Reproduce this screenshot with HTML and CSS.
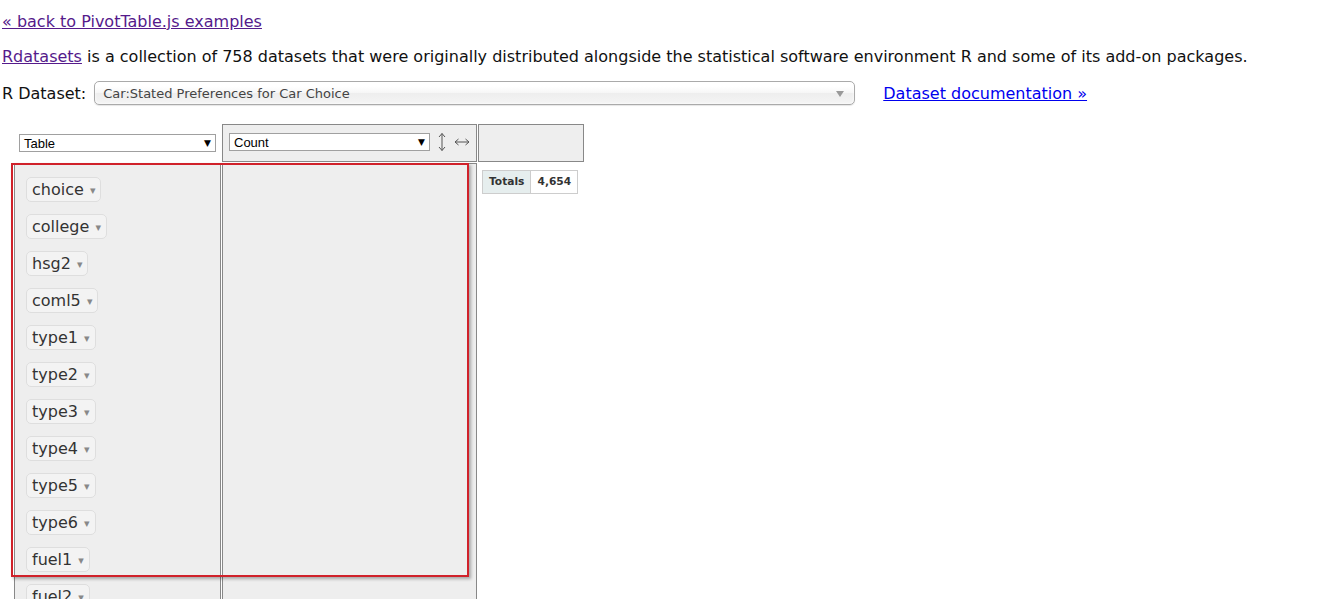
FILE: index.html
```html
<!DOCTYPE html>
<html>
<head>
<meta charset="utf-8">
<link rel="stylesheet" href="styles.css">
</head>
<body>
<p class="first"><a class="visited" href="#">« back to PivotTable.js examples</a></p>
<p class="second"><a class="visited" href="#">Rdatasets</a> is a collection of 758 datasets that were originally distributed alongside the statistical software environment R and some of its add-on packages.</p>
<p class="dsrow">
  <span class="dslabel">R Dataset:</span>
  <span class="chosen"><span class="chosen-text">Car:Stated Preferences for Car Choice</span><span class="chosen-arrow"></span></span>
  <a class="doclink" href="#">Dataset documentation »</a>
</p>

<div class="output">
  <table class="pvtUi">
    <tr class="row1">
      <td class="pvtRenderer">
        <div class="sel sel-table"><span>Table</span><span class="sel-arrow">▼</span></div>
      </td>
      <td class="pvtVals">
        <div class="valsline">
          <div class="sel sel-count"><span>Count</span><span class="sel-arrow">▼</span></div>
          <svg class="order" width="10" height="20" viewBox="0 0 10 20"><path d="M5 1.5 V18.5 M2 5 L5 1.5 L8 5 M2 15 L5 18.5 L8 15" fill="none" stroke="#555" stroke-width="1"/></svg>
          <svg class="order" width="16" height="10" viewBox="0 0 16 10"><path d="M1 5 H15 M4.5 2 L1 5 L4.5 8 M11.5 2 L15 5 L11.5 8" fill="none" stroke="#555" stroke-width="1"/></svg>
        </div>
      </td>
      <td class="pvtCols"></td>
    </tr>
    <tr class="row2">
      <td class="pvtUnused">
        <ul class="attrs">
          <li><span class="pvtAttr">choice <span class="tri">▾</span></span></li>
          <li><span class="pvtAttr">college <span class="tri">▾</span></span></li>
          <li><span class="pvtAttr">hsg2 <span class="tri">▾</span></span></li>
          <li><span class="pvtAttr">coml5 <span class="tri">▾</span></span></li>
          <li><span class="pvtAttr">type1 <span class="tri">▾</span></span></li>
          <li><span class="pvtAttr">type2 <span class="tri">▾</span></span></li>
          <li><span class="pvtAttr">type3 <span class="tri">▾</span></span></li>
          <li><span class="pvtAttr">type4 <span class="tri">▾</span></span></li>
          <li><span class="pvtAttr">type5 <span class="tri">▾</span></span></li>
          <li><span class="pvtAttr">type6 <span class="tri">▾</span></span></li>
          <li><span class="pvtAttr">fuel1 <span class="tri">▾</span></span></li>
          <li><span class="pvtAttr">fuel2 <span class="tri">▾</span></span></li>
        </ul>
      </td>
      <td class="pvtRows"></td>
      <td class="pvtRendererArea">
        <table class="pvtTable">
          <tr><th class="pvtTotalLabel">Totals</th><td class="pvtGrandTotal">4,654</td></tr>
        </table>
      </td>
    </tr>
  </table>
  <div class="highlight"></div>
</div>
</body>
</html>
```
FILE: styles.css
```css
html, body {
  margin: 0;
  padding: 0;
  background: #fff;
}
body {
  padding-left: 2px;
  font-family: "DejaVu Sans", Verdana, sans-serif;
  font-size: 16px;
  line-height: 19px;
  color: #111;
  overflow: hidden;
  height: 599px;
}
p {
  margin: 16px 0;
}
p.first {
  margin-top: 12px;
}
p.second {
  margin-bottom: 15px;
}
p.dsrow {
  margin-top: 15px;
}
a {
  color: #0000ee;
  text-decoration: underline;
}
a.visited {
  color: #551a8b;
}
.dsrow {
  display: flex;
  align-items: center;
  height: 24px;
}
.dslabel {
  margin-right: 8px;
}
.chosen {
  box-sizing: border-box;
  width: 761px;
  height: 24px;
  border: 1px solid #aaa;
  border-radius: 5px;
  background: linear-gradient(#ffffff 20%, #f6f6f6 50%, #eeeeee 52%, #f4f4f4 100%);
  box-shadow: 0 0 3px #fff inset, 0 1px 1px rgba(0,0,0,0.1);
  display: flex;
  align-items: center;
  justify-content: space-between;
  padding: 0 10px 0 8px;
  font-size: 13px;
  color: #444;
}
.chosen-arrow {
  width: 0;
  height: 0;
  border-left: 4px solid transparent;
  border-right: 4px solid transparent;
  border-top: 6px solid #999;
  margin-top: 1px;
}
.doclink {
  margin-left: 28px;
}
.output {
  position: relative;
  margin-top: 18px;
  margin-left: 11px;
}
.pvtUi {
  border-collapse: separate;
  border-spacing: 1px;
  color: #333;
}
.pvtUi > tbody > tr > td {
  padding: 5px;
  box-sizing: border-box;
}
.row1 > td {
  height: 38px;
}
.pvtRenderer {
  width: 207px;
  vertical-align: middle;
}
.pvtVals, .pvtCols, .pvtUnused, .pvtRows {
  border: 1px solid #888;
  background: #eeeeee;
}
.pvtUi > tbody > tr > td.pvtVals {
  width: 255px;
  vertical-align: top;
  padding: 7px 5px 5px 6px;
}
.pvtCols {
  width: 106px;
}
.pvtUnused, .pvtRows {
  vertical-align: top;
}
.pvtUi > tbody > tr > td.pvtUnused {
  padding-top: 7px;
}
.pvtUi > tbody > tr > td.pvtRendererArea {
  vertical-align: top;
  padding: 5px 5px 5px 4px;
}
.sel {
  box-sizing: border-box;
  height: 18px;
  border: 1px solid #a0a0a0;
  background: #fff;
  display: flex;
  align-items: center;
  justify-content: space-between;
  padding: 0 4px 0 4px;
  font-family: "Liberation Sans", Arial, sans-serif;
  font-size: 13px;
  color: #000;
}
.sel-table {
  width: 197px;
}
.sel-count {
  width: 201px;
}
.sel-arrow {
  font-size: 9px;
  color: #000;
  font-family: "DejaVu Sans", sans-serif;
}
.valsline {
  display: flex;
  align-items: center;
}
.order {
  display: block;
  margin-left: 7px;
}
.attrs {
  list-style: none;
  margin: 0;
  padding: 0;
}
.attrs li {
  padding: 8px 6px;
  height: 21px;
  line-height: 21px;
}
.pvtAttr {
  background: #f3f3f3;
  border: 1px solid #dedede;
  border-radius: 5px;
  padding: 2px 5px;
  white-space: nowrap;
  color: #333;
  font-size: 16px;
}
.tri {
  font-size: 11px;
  color: #888;
  vertical-align: 1px;
  margin-left: 1px;
  line-height: 10px;
}
.pvtTable {
  border-collapse: collapse;
  font-size: 8pt;
  font-family: "DejaVu Sans", Verdana, sans-serif;
  font-weight: bold;
  color: #333;
  margin-top: 2px;
}
.pvtTable th, .pvtTable td {
  border: 1px solid #cdcdcd;
  padding: 5px 6px;
  line-height: 12px;
}
.pvtTable th {
  background: #e6eeee;
}
.pvtTable td {
  background: #fff;
}
.highlight {
  position: absolute;
  left: -2px;
  top: 40px;
  width: 458px;
  height: 414px;
  box-sizing: border-box;
  border: 2px solid #d0212a;
  box-shadow: 2px 2px 3px rgba(0,0,0,0.3);
  pointer-events: none;
}
```
